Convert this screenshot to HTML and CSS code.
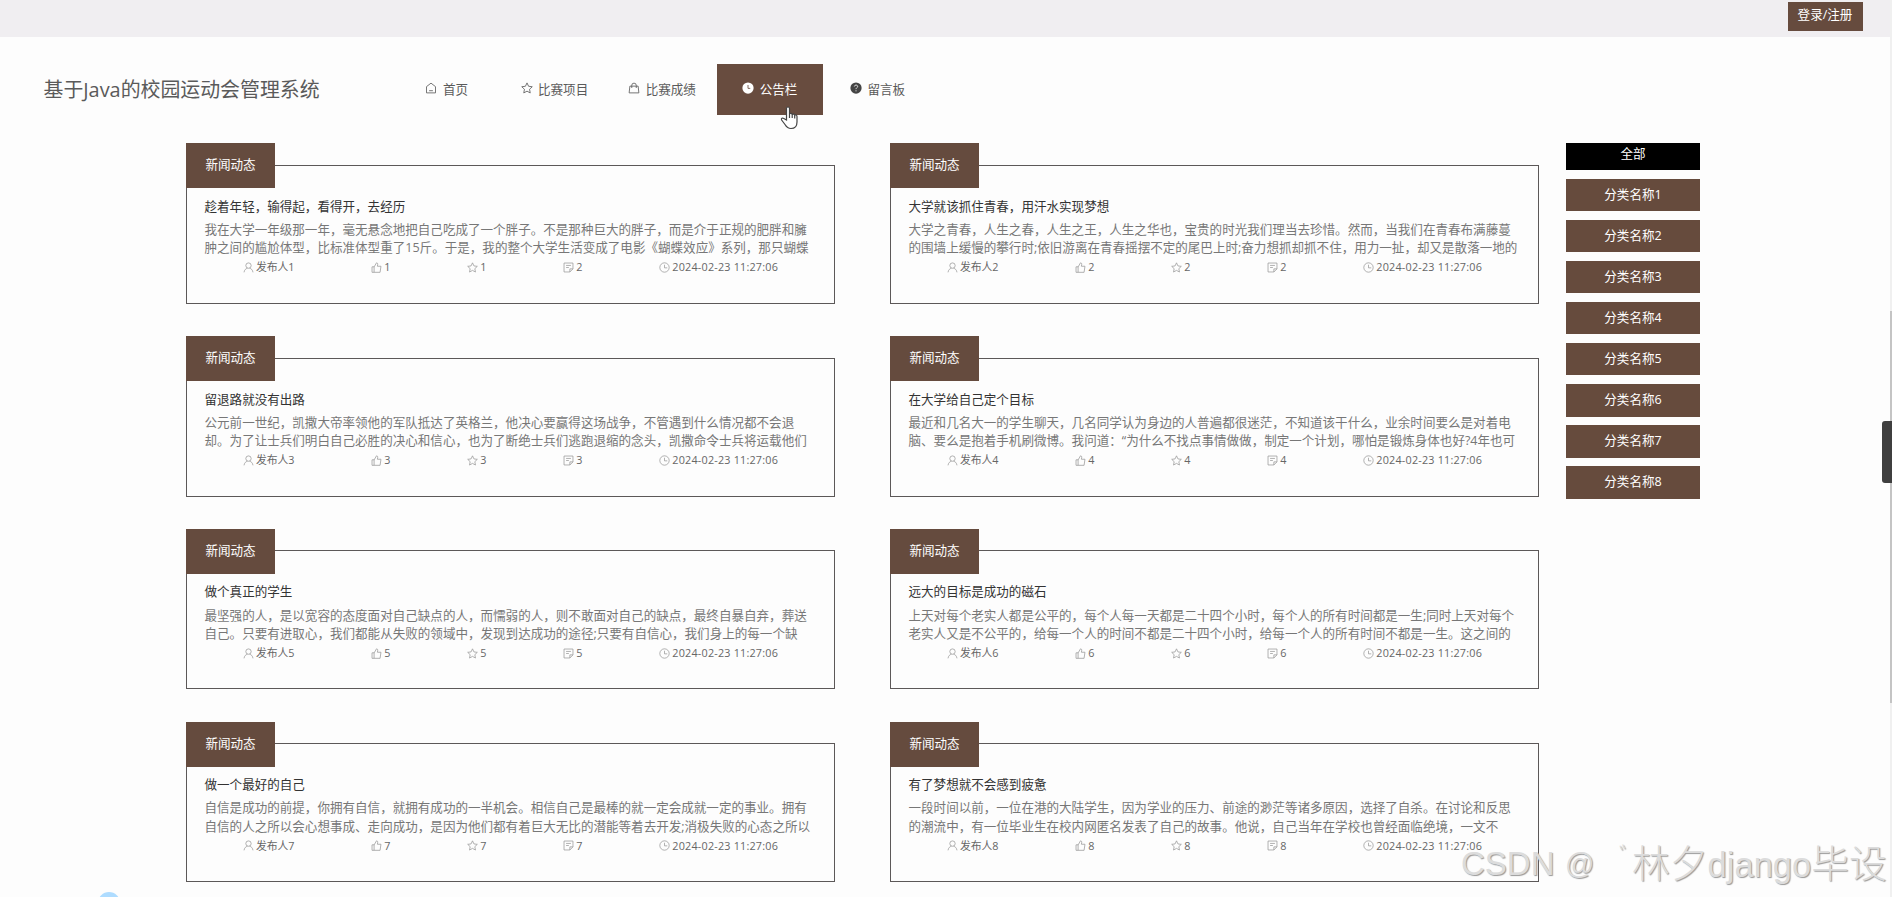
FILE: index.html
```html
<!DOCTYPE html>
<html lang="zh-CN">
<head>
  <meta charset="UTF-8">
  <title>基于Java的校园运动会管理系统</title>
  <meta name="viewport" content="width=device-width, initial-scale=1">
  <link rel="stylesheet" href="styles.css">
</head>
<body>
  <svg class="sprite">
    <symbol id="i-home" viewBox="0 0 16 16"><path d="M2 6.2 8 1.5l6 4.7v8.3H2zM5.5 11.6h5"/></symbol>
    <symbol id="i-star" viewBox="0 0 16 16"><path d="m8 1.2 2.1 4.5 4.9.6-3.6 3.4.9 4.9L8 12.2l-4.3 2.4.9-4.9L1 6.3l4.9-.6z"/></symbol>
    <symbol id="i-bag" viewBox="0 0 16 16"><path d="M2.5 5.5h11l1 9h-13zM5 8V4.5a3 3 0 0 1 6 0V8"/></symbol>
    <symbol id="i-user" viewBox="0 0 16 16"><circle cx="8" cy="5.2" r="3.9"/><path d="M1.5 15c.5-3.6 2.5-5.4 5-5.9M14.500 15c-.5-3.600-2.500-5.400-5-5.900"/></symbol>
    <symbol id="i-like" viewBox="0 0 16 16"><path d="M1.500 7h3v8h-3zM4.500 7.200 8 1.200c1.800 0 2.200 1.500 1.300 5H14.500l-1.300 8.800H4.500"/></symbol>
    <symbol id="i-note" viewBox="0 0 16 16"><path d="M1.500 1.500h13v8.500l-4.500 4.500H1.500zM14.500 10H10v4.500M4.500 5h7M4.500 8h4"/></symbol>
    <symbol id="i-clock" viewBox="0 0 16 16"><circle cx="8" cy="8" r="6.800"/><path d="M8 4v4.500h4"/></symbol>
  </svg>

  <div class="topbar"><a class="login">登录/注册</a></div>

  <div class="header">
    <h1 class="logo">基于Java的校园运动会管理系统</h1>
    <ul class="nav">
      <li><svg class="icon"><use href="#i-home"/></svg>首页</li>
      <li><svg class="icon"><use href="#i-star"/></svg>比赛项目</li>
      <li><svg class="icon"><use href="#i-bag"/></svg>比赛成绩</li>
      <li class="active">
        <svg class="icon" viewBox="0 0 16 16"><circle class="white" cx="8" cy="8" r="7.500"/><path class="brown" d="M8 4v4.500h3"/></svg>公告栏
        <svg class="cursor" viewBox="0 0 19 24"><path d="M6.500 14V2.500c0-2 3-2 3 0V8c.5-1 2.500-.8 2.700.6.600-.9 2.300-.6 2.500.6.700-.6 2.300-.3 2.300 1.300V16c0 4-2 6.500-6 6.500-3 0-4.500-1.500-6-4L1.600 14c-.8-1.500 1-2.500 2.200-1.400zM9.500 8v4M12.200 9v3M14.700 9.500v3"/></svg>
      </li>
      <li><svg class="icon" viewBox="0 0 16 16"><circle class="dark" cx="8" cy="8" r="7.500"/><path class="light" d="M5.800 6c.2-2.600 4.600-2.500 4.400.2C10 7.600 8 7.800 8 9.500M8 11v1.500"/></svg>留言板</li>
    </ul>
  </div>

  <div class="main">
    <div class="list">
      <div class="card">
        <span class="badge">新闻动态</span>
        <h3>趁着年轻，输得起，看得开，去经历</h3>
        <p>我在大学一年级那一年，毫无悬念地把自己吃成了一个胖子。不是那种巨大的胖子，而是介于正规的肥胖和臃<br>肿之间的尴尬体型，比标准体型重了15斤。于是，我的整个大学生活变成了电影《蝴蝶效应》系列，那只蝴蝶</p>
        <div class="meta">
          <span><svg class="icon"><use href="#i-user"/></svg>发布人1</span>
          <span><svg class="icon"><use href="#i-like"/></svg>1</span>
          <span><svg class="icon"><use href="#i-star"/></svg>1</span>
          <span><svg class="icon"><use href="#i-note"/></svg>2</span>
          <span class="time"><svg class="icon"><use href="#i-clock"/></svg>2024-02-23 11:27:06</span>
        </div>
      </div>
      <div class="card">
        <span class="badge">新闻动态</span>
        <h3>大学就该抓住青春，用汗水实现梦想</h3>
        <p>大学之青春，人生之春，人生之王，人生之华也，宝贵的时光我们理当去珍惜。然而，当我们在青春布满藤蔓<br>的围墙上缓慢的攀行时;依旧游离在青春摇摆不定的尾巴上时;奋力想抓却抓不住，用力一扯，却又是散落一地的</p>
        <div class="meta">
          <span><svg class="icon"><use href="#i-user"/></svg>发布人2</span>
          <span><svg class="icon"><use href="#i-like"/></svg>2</span>
          <span><svg class="icon"><use href="#i-star"/></svg>2</span>
          <span><svg class="icon"><use href="#i-note"/></svg>2</span>
          <span class="time"><svg class="icon"><use href="#i-clock"/></svg>2024-02-23 11:27:06</span>
        </div>
      </div>
      <div class="card">
        <span class="badge">新闻动态</span>
        <h3>留退路就没有出路</h3>
        <p>公元前一世纪，凯撒大帝率领他的军队抵达了英格兰，他决心要赢得这场战争，不管遇到什么情况都不会退<br>却。为了让士兵们明白自己必胜的决心和信心，也为了断绝士兵们逃跑退缩的念头，凯撒命令士兵将运载他们</p>
        <div class="meta">
          <span><svg class="icon"><use href="#i-user"/></svg>发布人3</span>
          <span><svg class="icon"><use href="#i-like"/></svg>3</span>
          <span><svg class="icon"><use href="#i-star"/></svg>3</span>
          <span><svg class="icon"><use href="#i-note"/></svg>3</span>
          <span class="time"><svg class="icon"><use href="#i-clock"/></svg>2024-02-23 11:27:06</span>
        </div>
      </div>
      <div class="card">
        <span class="badge">新闻动态</span>
        <h3>在大学给自己定个目标</h3>
        <p>最近和几名大一的学生聊天，几名同学认为身边的人普遍都很迷茫，不知道该干什么，业余时间要么是对着电<br>脑、要么是抱着手机刷微博。我问道：“为什么不找点事情做做，制定一个计划，哪怕是锻炼身体也好?4年也可</p>
        <div class="meta">
          <span><svg class="icon"><use href="#i-user"/></svg>发布人4</span>
          <span><svg class="icon"><use href="#i-like"/></svg>4</span>
          <span><svg class="icon"><use href="#i-star"/></svg>4</span>
          <span><svg class="icon"><use href="#i-note"/></svg>4</span>
          <span class="time"><svg class="icon"><use href="#i-clock"/></svg>2024-02-23 11:27:06</span>
        </div>
      </div>
      <div class="card">
        <span class="badge">新闻动态</span>
        <h3>做个真正的学生</h3>
        <p>最坚强的人，是以宽容的态度面对自己缺点的人，而懦弱的人，则不敢面对自己的缺点，最终自暴自弃，葬送<br>自己。只要有进取心，我们都能从失败的领域中，发现到达成功的途径;只要有自信心，我们身上的每一个缺</p>
        <div class="meta">
          <span><svg class="icon"><use href="#i-user"/></svg>发布人5</span>
          <span><svg class="icon"><use href="#i-like"/></svg>5</span>
          <span><svg class="icon"><use href="#i-star"/></svg>5</span>
          <span><svg class="icon"><use href="#i-note"/></svg>5</span>
          <span class="time"><svg class="icon"><use href="#i-clock"/></svg>2024-02-23 11:27:06</span>
        </div>
      </div>
      <div class="card">
        <span class="badge">新闻动态</span>
        <h3>远大的目标是成功的磁石</h3>
        <p>上天对每个老实人都是公平的，每个人每一天都是二十四个小时，每个人的所有时间都是一生;同时上天对每个<br>老实人又是不公平的，给每一个人的时间不都是二十四个小时，给每一个人的所有时间不都是一生。这之间的</p>
        <div class="meta">
          <span><svg class="icon"><use href="#i-user"/></svg>发布人6</span>
          <span><svg class="icon"><use href="#i-like"/></svg>6</span>
          <span><svg class="icon"><use href="#i-star"/></svg>6</span>
          <span><svg class="icon"><use href="#i-note"/></svg>6</span>
          <span class="time"><svg class="icon"><use href="#i-clock"/></svg>2024-02-23 11:27:06</span>
        </div>
      </div>
      <div class="card">
        <span class="badge">新闻动态</span>
        <h3>做一个最好的自己</h3>
        <p>自信是成功的前提，你拥有自信，就拥有成功的一半机会。相信自己是最棒的就一定会成就一定的事业。拥有<br>自信的人之所以会心想事成、走向成功，是因为他们都有着巨大无比的潜能等着去开发;消极失败的心态之所以</p>
        <div class="meta">
          <span><svg class="icon"><use href="#i-user"/></svg>发布人7</span>
          <span><svg class="icon"><use href="#i-like"/></svg>7</span>
          <span><svg class="icon"><use href="#i-star"/></svg>7</span>
          <span><svg class="icon"><use href="#i-note"/></svg>7</span>
          <span class="time"><svg class="icon"><use href="#i-clock"/></svg>2024-02-23 11:27:06</span>
        </div>
      </div>
      <div class="card">
        <span class="badge">新闻动态</span>
        <h3>有了梦想就不会感到疲惫</h3>
        <p>一段时间以前，一位在港的大陆学生，因为学业的压力、前途的渺茫等诸多原因，选择了自杀。在讨论和反思<br>的潮流中，有一位毕业生在校内网匿名发表了自己的故事。他说，自己当年在学校也曾经面临绝境，一文不</p>
        <div class="meta">
          <span><svg class="icon"><use href="#i-user"/></svg>发布人8</span>
          <span><svg class="icon"><use href="#i-like"/></svg>8</span>
          <span><svg class="icon"><use href="#i-star"/></svg>8</span>
          <span><svg class="icon"><use href="#i-note"/></svg>8</span>
          <span class="time"><svg class="icon"><use href="#i-clock"/></svg>2024-02-23 11:27:06</span>
        </div>
      </div>
    </div>

    <div class="category">
      <a class="all">全部</a>
      <a>分类名称1</a>
      <a>分类名称2</a>
      <a>分类名称3</a>
      <a>分类名称4</a>
      <a>分类名称5</a>
      <a>分类名称6</a>
      <a>分类名称7</a>
      <a>分类名称8</a>
    </div>
  </div>

  <div class="scrollbar"><div class="thumb"></div></div>
  <div class="side-handle"></div>
  <div class="bubble"></div>
  <div class="watermark"><span class="csdn">CSDN</span><span class="at">@</span><span class="tick">ﾞ</span><span class="name">林夕<span class="en">django</span>毕设</span></div>
</body>
</html>
```

FILE: styles.css
```css
* {
  box-sizing: border-box;
}
body {
  margin: 0;
  height: 897px;
  overflow: hidden;
  position: relative;
  background: #fdfdfd;
  color: #5a5a5a;
  font-family: "Open Sans", "Noto Sans CJK SC", sans-serif;
  font-size: 12.56px;
}
.sprite {
  display: none;
}
.icon {
  width: 12px;
  height: 12px;
  fill: none;
  stroke: currentColor;
  stroke-width: 1.1;
  flex: none;
}
.topbar {
  height: 36.5px;
  padding: 2px 29.5px 0 0;
  background: #f0eef1;
  display: flex;
  justify-content: flex-end;
}
.login {
  width: 75px;
  height: 29px;
  line-height: 26px;
  text-align: center;
  background: #664b3e;
  color: #fff;
}

/* header */
.header {
  display: flex;
  align-items: center;
  height: 106.5px;
  padding: 0 0 1px 43.5px;
}
.logo {
  margin: 0;
  width: 350px;
  padding-bottom: 1px;
  font-size: 19.9px;
  font-weight: 400;
  white-space: nowrap;
}
.nav {
  display: flex;
  gap: 1.3px;
  margin: 0;
  padding: 0;
  list-style: none;
}
.nav li {
  position: relative;
  display: flex;
  align-items: center;
  justify-content: center;
  gap: 5.5px;
  width: 106.4px;
  height: 51px;
  padding-bottom: 2px;
}
.nav .active {
  background: #684c3f;
  color: #fff;
}
.white {
  fill: #fff;
  stroke: none;
}
.brown {
  stroke: #684c3f;
}
.dark {
  fill: #444;
  stroke: none;
}
.light {
  stroke: #fff;
}
.cursor {
  position: absolute;
  left: 63px;
  top: 42px;
  width: 19px;
  height: 24px;
  fill: #fff;
  stroke: #444;
  stroke-width: 1.2;
  z-index: 2;
}

/* news list */
.main {
  display: flex;
  align-items: flex-start;
  padding-left: 186px;
}
.list {
  display: grid;
  grid-template-columns: 649px 649px;
  column-gap: 55px;
  row-gap: 53.8px;
  padding-top: 21.9px;
}
.card {
  position: relative;
  height: 139px;
  padding: 31px 17.5px 0;
  border: 1px solid #5c5858;
}
.badge {
  position: absolute;
  left: -1px;
  top: -22.5px;
  width: 89px;
  height: 45px;
  line-height: 44px;
  text-align: center;
  background: #654b3e;
  color: #fff;
}
.card h3 {
  margin: 0 0 5.2px;
  font-size: 12.56px;
  font-weight: 400;
  line-height: 19px;
  color: #333;
}
.card p {
  margin: 0;
  line-height: 18.2px;
  color: #777;
  white-space: nowrap;
}
.meta {
  display: flex;
  justify-content: space-around;
  margin-top: 1px;
  line-height: 18px;
  font-size: 10.8px;
  color: #666;
}
.meta span {
  display: flex;
  align-items: center;
  gap: 2px;
}
.meta .icon {
  width: 11px;
  height: 11px;
  color: #999;
}
.meta .time {
  letter-spacing: .2px;
}

/* categories */
.category {
  display: flex;
  flex-direction: column;
  gap: 8.6px;
  width: 134px;
  margin-left: 27px;
}
.category a {
  height: 32.5px;
  line-height: 32.5px;
  text-align: center;
  background: #664b3d;
  color: #fff;
}
.category .all {
  height: 27px;
  line-height: 22px;
  background: #000;
}

/* floating things */
.scrollbar {
  position: absolute;
  top: 0;
  right: 0;
  width: 2px;
  height: 897px;
  padding-top: 311px;
  background: #f0f0f0;
}
.thumb {
  height: 392px;
  background: #c4c4c4;
}
.side-handle {
  position: absolute;
  right: 0;
  top: 421px;
  width: 10px;
  height: 62px;
  border-radius: 3px 0 0 3px;
  background: #3f3f3f;
}
.bubble {
  position: absolute;
  left: 98px;
  top: 892px;
  width: 22px;
  height: 22px;
  border-radius: 50%;
  background: #aedcff;
}
.watermark {
  position: absolute;
  right: 4px;
  bottom: 8px;
  width: 427px;
  height: 50px;
  display: flex;
  align-items: center;
  font-family: "Liberation Sans", "Noto Sans CJK SC", sans-serif;
  font-size: 33px;
  font-weight: 300;
  line-height: 50px;
  white-space: nowrap;
  color: #dcdcdc;
  text-shadow: 1px 1px 1px #999;
}
.csdn {
  width: 104px;
}
.at {
  width: 54px;
  font-size: 29px;
}
.tick {
  width: 13px;
  padding-bottom: 14px;
  font-size: 25px;
}
.name {
  font-size: 37.8px;
}
.en {
  font-size: 34.5px;
}
```
